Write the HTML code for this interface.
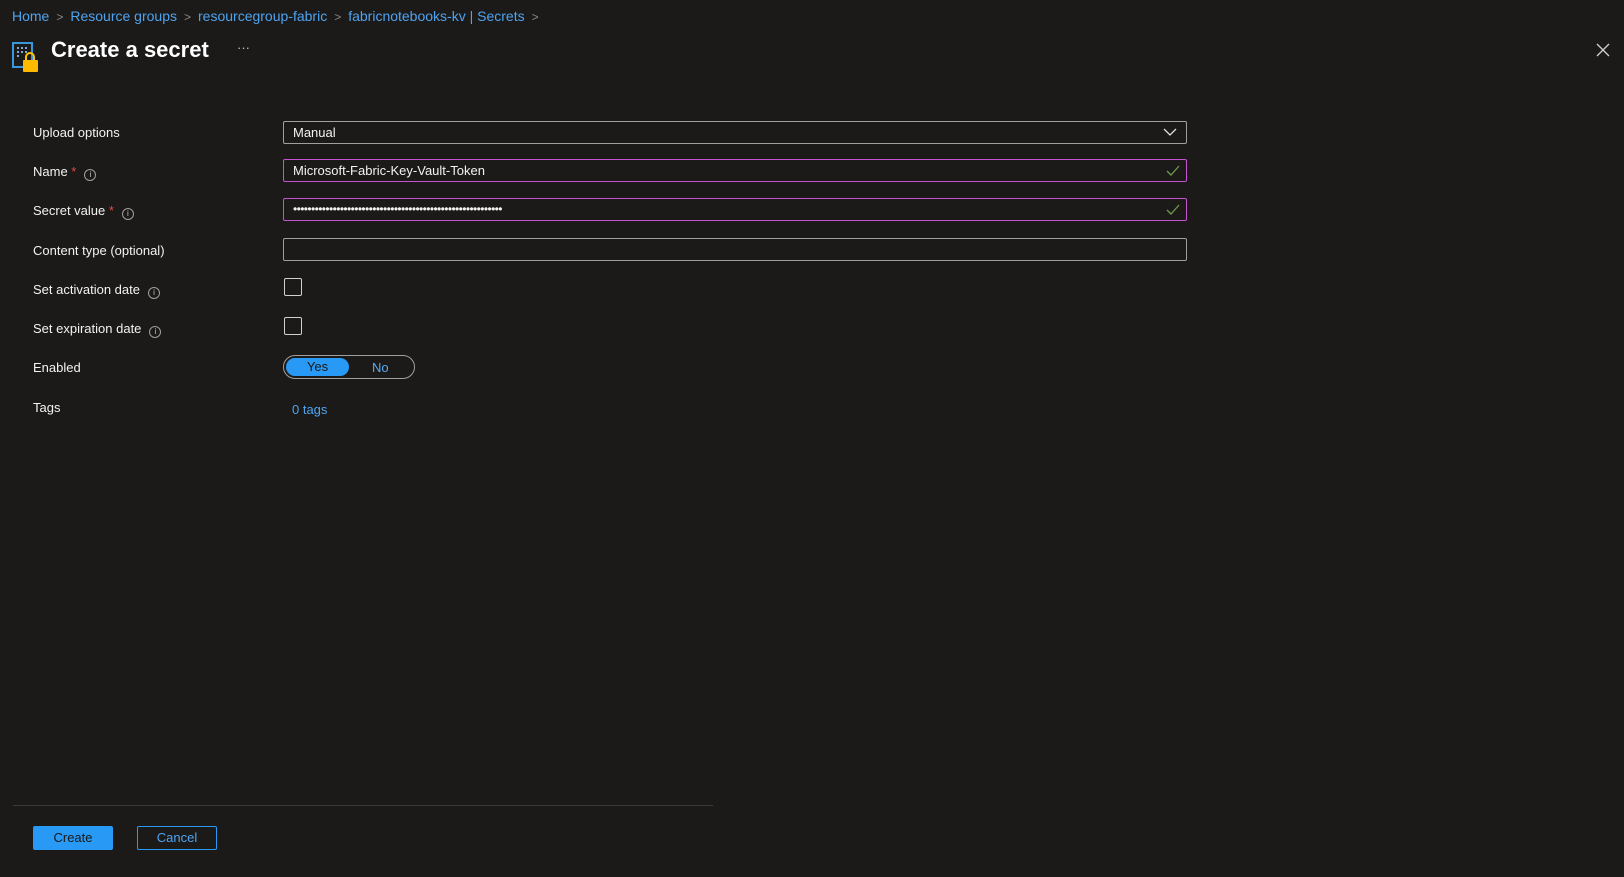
<!DOCTYPE html>
<html><head><meta charset="utf-8"><style>
*{margin:0;padding:0;box-sizing:border-box}
body{width:1624px;height:877px;background:#1b1a19;color:#f3f2f1;font-family:"Liberation Sans",sans-serif;font-size:13px;position:relative;overflow:hidden}
.a{position:absolute}
.bc{left:12px;top:8px;font-size:14px;color:#4ea3f0;white-space:nowrap}
.bc span.s{color:#8a8886;margin:0 7px;font-size:12px}
.lbl{left:33px;font-size:13px;color:#f3f2f1}
.inp{left:283px;width:904px;height:23px;border:1px solid #a19f9d;border-radius:2px;padding-left:9px;line-height:21px;font-size:13px}
.pur{border-color:#c552d3}
.req{color:#e04a4a}
.info{display:inline-block;width:12px;height:12px;border:1px solid #a19f9d;border-radius:50%;font-size:8px;line-height:10px;text-align:center;color:#c8c6c4;vertical-align:-1px;margin-left:8px}
.cb{left:284px;width:18px;height:18px;border:1px solid #d2d0ce;border-radius:2px}
</style></head><body>
<div class="a bc">Home<span class="s">&gt;</span>Resource groups<span class="s">&gt;</span>resourcegroup-fabric<span class="s">&gt;</span>fabricnotebooks-kv | Secrets<span class="s">&gt;</span></div>
<svg class="a" style="left:12px;top:41px" width="28" height="32" viewBox="0 0 28 32"><rect x="1" y="2" width="19" height="24" fill="#1b1a19" stroke="#3a96dd" stroke-width="2"/><g fill="#7aa8d8"><rect x="5" y="6" width="2" height="2"/><rect x="9" y="6" width="2" height="2"/><rect x="13" y="6" width="2" height="2"/><rect x="5" y="10" width="2" height="2"/><rect x="9" y="10" width="2" height="2"/><rect x="13" y="10" width="2" height="2"/><rect x="5" y="14" width="2" height="2"/></g><path d="M14 19v-3a4 4 0 0 1 8 0v3" fill="none" stroke="#ffc000" stroke-width="2"/><rect x="11" y="19" width="15" height="12" rx="1" fill="#ffb900"/></svg>
<div class="a" style="left:51px;top:37px;font-size:22px;font-weight:bold;color:#fff">Create a secret</div>
<div class="a" style="left:237px;top:40px;font-size:13px;color:#c8c6c4">···</div>
<svg class="a" style="left:1596px;top:43px" width="14" height="14"><path d="M1 1L13 13M13 1L1 13" stroke="#d2d0ce" stroke-width="1.3"/></svg>

<div class="a lbl" style="top:125px">Upload options</div>
<div class="a inp" style="top:121px">Manual<svg class="a" style="right:9px;top:6px" width="14" height="9"><path d="M1 1l6 6 6-6" fill="none" stroke="#e1dfdd" stroke-width="1.3"/></svg></div>

<div class="a lbl" style="top:164px">Name <span class="req">*</span><span class="info">i</span></div>
<div class="a inp pur" style="top:159px">Microsoft-Fabric-Key-Vault-Token<svg class="a" style="right:6px;top:5px" width="14" height="11"><path d="M1 6l4 4 8-9" fill="none" stroke="#6f9a4a" stroke-width="1.3"/></svg></div>

<div class="a lbl" style="top:203px">Secret value <span class="req">*</span><span class="info">i</span></div>
<div class="a inp pur" style="top:198px;letter-spacing:-0.6px;font-size:12px">••••••••••••••••••••••••••••••••••••••••••••••••••••••••••<svg class="a" style="right:6px;top:5px" width="14" height="11"><path d="M1 6l4 4 8-9" fill="none" stroke="#6f9a4a" stroke-width="1.3"/></svg></div>

<div class="a lbl" style="top:243px">Content type (optional)</div>
<div class="a inp" style="top:238px"></div>

<div class="a lbl" style="top:282px">Set activation date<span class="info">i</span></div>
<div class="a cb" style="top:278px"></div>
<div class="a lbl" style="top:321px">Set expiration date<span class="info">i</span></div>
<div class="a cb" style="top:317px"></div>

<div class="a lbl" style="top:360px">Enabled</div>
<div class="a" style="left:283px;top:355px;width:132px;height:24px;border:1px solid #a19f9d;border-radius:12px"></div>
<div class="a" style="left:286px;top:358px;width:63px;height:18px;border-radius:9px;background:#2899f5;color:#1b1a19;text-align:center;line-height:18px;font-size:13px">Yes</div>
<div class="a" style="left:372px;top:360px;color:#5aa9f0;font-size:13px">No</div>

<div class="a lbl" style="top:400px">Tags</div>
<div class="a" style="left:292px;top:402px;color:#4ea3f0">0 tags</div>

<div class="a" style="left:13px;top:805px;width:700px;height:1px;background:#3b3a39"></div>
<div class="a" style="left:33px;top:826px;width:80px;height:24px;background:#2899f5;border-radius:2px;color:#1b1a19;text-align:center;line-height:24px">Create</div>
<div class="a" style="left:137px;top:826px;width:80px;height:24px;border:1px solid #2899f5;border-radius:2px;color:#4ea3f0;text-align:center;line-height:22px">Cancel</div>
</body></html>
